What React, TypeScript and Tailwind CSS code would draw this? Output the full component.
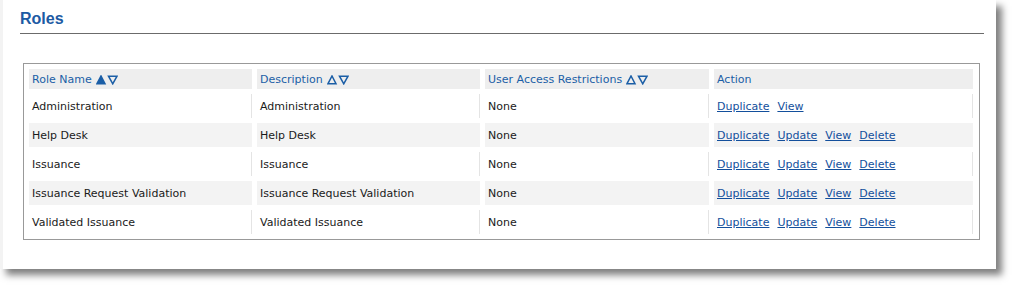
import React from "react";

const FONT = { fontFamily: '"DejaVu Sans", Verdana, sans-serif' };

type Row = { name: string; desc: string; ua: string; actions: string[] };

const rows: Row[] = [
  { name: "Administration", desc: "Administration", ua: "None", actions: ["Duplicate", "View"] },
  { name: "Help Desk", desc: "Help Desk", ua: "None", actions: ["Duplicate", "Update", "View", "Delete"] },
  { name: "Issuance", desc: "Issuance", ua: "None", actions: ["Duplicate", "Update", "View", "Delete"] },
  { name: "Issuance Request Validation", desc: "Issuance Request Validation", ua: "None", actions: ["Duplicate", "Update", "View", "Delete"] },
  { name: "Validated Issuance", desc: "Validated Issuance", ua: "None", actions: ["Duplicate", "Update", "View", "Delete"] },
];

function SortArrows({ upFilled }: { upFilled?: boolean }) {
  return (
    <svg width="22" height="10" viewBox="0 0 22 10" className="ml-[4px] mb-[1px]">
      <polygon
        points="1,8.7 5,1 9,8.7"
        fill={upFilled ? "#1b5ea6" : "none"}
        stroke="#1b5ea6"
        strokeWidth="1.5"
        strokeLinejoin="miter"
      />
      <polygon
        points="12.5,1.2 21,1.2 16.75,8.8"
        fill="none"
        stroke="#1b5ea6"
        strokeWidth="1.5"
        strokeLinejoin="miter"
      />
    </svg>
  );
}

function Header({ label, sort, upFilled }: { label: string; sort?: boolean; upFilled?: boolean }) {
  return (
    <div className="h-[20px] bg-[#eeeeee] px-[3px] pt-[2px] flex items-center text-[11px] text-[#1b5ea6]">
      <span>{label}</span>
      {sort && <SortArrows upFilled={upFilled} />}
    </div>
  );
}

export default function App() {
  return (
    <div className="w-[1013px] h-[286px] bg-white overflow-hidden" style={FONT}>
      <div className="w-[996px] h-[269px] bg-white border-l-[3px] border-[#f3f3f3] shadow-[6px_6px_7px_rgba(0,0,0,0.5)] pl-[17px] pr-[12px] pt-[9px]">
        <div className="border-b border-[#6b6b6b] h-[25px]">
          <h1
            className="text-[16px] leading-[20px] font-bold text-[#1c5aa3]"
            style={{ fontFamily: '"Liberation Sans", Arial, sans-serif' }}
          >
            Roles
          </h1>
        </div>
        <div className="ml-[3px] mt-[29px] w-[957px] border border-[#999999] p-[5px] grid grid-cols-[223px_223px_224px_259px] gap-[5px] text-[11px] text-[#1a1a1a]">
          <Header label="Role Name" sort upFilled />
          <Header label="Description" sort />
          <Header label="User Access Restrictions" sort />
          <Header label="Action" />
          {rows.map((r, i) => {
            const gray = i % 2 === 1;
            const cell =
              "h-[24px] px-[3px] pt-[3px] flex items-center border-r " +
              (gray ? "bg-[#f3f3f3] border-[#f3f3f3]" : "bg-white border-[#e4e4e4]");
            return (
              <React.Fragment key={r.name}>
                <div className={cell}>{r.name}</div>
                <div className={cell}>{r.desc}</div>
                <div className={cell}>{r.ua}</div>
                <div className={cell + " gap-[8px]"}>
                  {r.actions.map((a) => (
                    <a key={a} href="#" className="text-[#134f9c] underline">
                      {a}
                    </a>
                  ))}
                </div>
              </React.Fragment>
            );
          })}
        </div>
      </div>
    </div>
  );
}
